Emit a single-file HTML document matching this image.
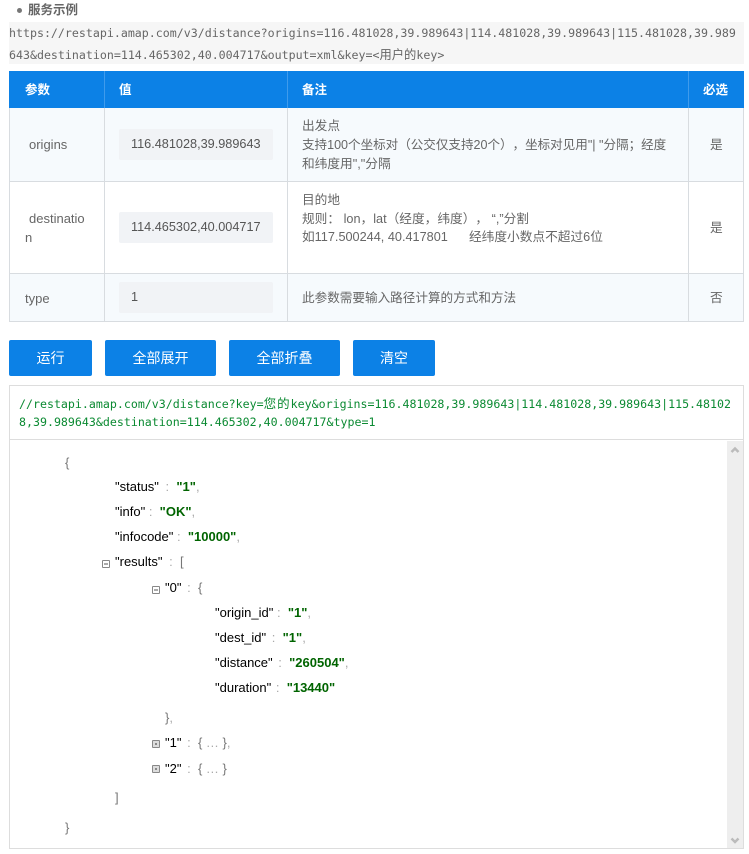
<!DOCTYPE html>
<html lang="zh-CN">
<head>
<meta charset="utf-8">
<title>服务示例</title>
<style>
html,body{margin:0;padding:0;background:#fff;}
body{width:749px;height:854px;position:relative;overflow:hidden;font-family:"Liberation Sans","Noto Sans CJK SC",sans-serif;text-spacing-trim:space-all;}
.a{position:absolute;white-space:nowrap;}
.b{position:absolute;}
.t{font-size:12.7px;color:#666;line-height:18px;margin-top:1px;}
.l{font-size:13px;}
.th{font-size:12.5px;color:#fff;font-weight:bold;line-height:18px;margin-top:1px;}
.in{position:absolute;left:119px;width:154px;height:31px;background:#f1f3f6;border-radius:2px;font-size:12.7px;color:#555;line-height:31px;text-indent:12px;}
.btn{position:absolute;top:340px;height:36px;background:#0c81e6;border-radius:2px;color:#fff;font-size:14px;line-height:36px;text-align:center;}
.m{font-family:"DejaVu Sans Mono","Noto Sans CJK SC",monospace;font-size:11.628px;line-height:18px;}
.j{position:absolute;white-space:pre;font-family:"Liberation Sans",sans-serif;font-size:13px;line-height:16px;color:#000;margin-top:1px;}
.j i{font-style:normal;color:#aaa;}
.j b{color:#006400;}
.j u{text-decoration:none;color:#777;}
.ic{position:absolute;width:6px;height:6px;border:1px solid #888;border-radius:1px;background:#fff;}
.ic:before{content:"";position:absolute;left:1px;top:2px;width:4px;height:2px;background:#aaa;}
.ic.p{background:#ddd;}
.ic.p:before{left:2px;top:2px;width:2px;height:2px;background:#888;}
</style>
</head>
<body>
<div class="b" style="left:17px;top:8px;width:5px;height:5px;border-radius:50%;background:#777;"></div>
<div class="a" style="left:28px;top:1px;font-size:12.5px;font-weight:bold;color:#666;line-height:18px;">服务示例</div>

<div class="b" style="left:9px;top:22px;width:735px;height:42px;background:#f6f6f6;"></div>
<div class="a m" style="left:9px;top:24px;color:#666;">https://restapi.amap.com/v3/distance?origins=116.481028,39.989643|114.481028,39.989643|115.481028,39.989</div>
<div class="a m" style="left:9px;top:46px;color:#666;">643&amp;destination=114.465302,40.004717&amp;output=xml&amp;key=&lt;<span style="font-size:12.3px">用户的</span>key&gt;</div>

<!-- table -->
<div class="b" style="left:9px;top:71px;width:735px;height:37px;background:#0c81e6;"></div>
<div class="b" style="left:9px;top:108px;width:735px;height:73px;background:#f6fafd;"></div>
<div class="b" style="left:9px;top:273px;width:735px;height:48px;background:#f6fafd;"></div>
<div class="b" style="left:104px;top:71px;width:1px;height:37px;background:#3f9bec;"></div>
<div class="b" style="left:287px;top:71px;width:1px;height:37px;background:#3f9bec;"></div>
<div class="b" style="left:688px;top:71px;width:1px;height:37px;background:#3f9bec;"></div>
<div class="b" style="left:9px;top:108px;width:1px;height:214px;background:#d8dce0;"></div>
<div class="b" style="left:104px;top:108px;width:1px;height:214px;background:#d8dce0;"></div>
<div class="b" style="left:287px;top:108px;width:1px;height:214px;background:#d8dce0;"></div>
<div class="b" style="left:688px;top:108px;width:1px;height:214px;background:#d8dce0;"></div>
<div class="b" style="left:743px;top:108px;width:1px;height:214px;background:#d8dce0;"></div>
<div class="b" style="left:9px;top:181px;width:735px;height:1px;background:#d8dce0;"></div>
<div class="b" style="left:9px;top:273px;width:735px;height:1px;background:#d8dce0;"></div>
<div class="b" style="left:9px;top:321px;width:735px;height:1px;background:#d8dce0;"></div>

<div class="a th" style="left:25px;top:80px;">参数</div>
<div class="a th" style="left:119px;top:80px;">值</div>
<div class="a th" style="left:302px;top:80px;">备注</div>
<div class="a th" style="left:703px;top:80px;">必选</div>

<div class="a t l" style="left:29px;top:135px;">origins</div>
<div class="in" style="top:129px;">116.481028,39.989643</div>
<div class="a t" style="left:302px;top:116px;">出发点</div>
<div class="a t" style="left:302px;top:135px;font-size:12.55px;">支持100个坐标对（公交仅支持20个），坐标对见用"| "分隔；经度</div>
<div class="a t" style="left:302px;top:154px;">和纬度用","分隔</div>
<div class="a t" style="left:710px;top:135px;">是</div>

<div class="a t l" style="left:29px;top:209px;">destinatio</div>
<div class="a t l" style="left:25px;top:228px;">n</div>
<div class="in" style="top:212px;">114.465302,40.004717</div>
<div class="a t" style="left:302px;top:190px;">目的地</div>
<div class="a t" style="left:302px;top:209px;">规则： lon，lat（经度，纬度）， “,”分割</div>
<div class="a t" style="left:302px;top:227px;">如117.500244, 40.417801 &nbsp; &nbsp; &nbsp;经纬度小数点不超过6位</div>
<div class="a t" style="left:710px;top:218px;">是</div>

<div class="a t l" style="left:25px;top:289px;">type</div>
<div class="in" style="top:282px;">1</div>
<div class="a t" style="left:302px;top:288px;font-size:12.6px;">此参数需要输入路径计算的方式和方法</div>
<div class="a t" style="left:710px;top:288px;">否</div>

<!-- buttons -->
<div class="btn" style="left:9px;width:83px;">运行</div>
<div class="btn" style="left:105px;width:111px;">全部展开</div>
<div class="btn" style="left:229px;width:111px;">全部折叠</div>
<div class="btn" style="left:353px;width:82px;">清空</div>

<!-- result box -->
<div class="b" style="left:9px;top:385px;width:733px;height:462px;border:1px solid #ddd;"></div>
<div class="b" style="left:10px;top:439px;width:733px;height:1px;background:#ddd;"></div>
<div class="a m" style="left:19px;top:395px;color:#0b8a32;">//restapi.amap.com/v3/distance?key=<span style="font-size:12.5px;letter-spacing:1px">您的</span>key&amp;origins=116.481028,39.989643|114.481028,39.989643|115.48102</div>
<div class="a m" style="left:19px;top:413px;color:#0b8a32;">8,39.989643&amp;destination=114.465302,40.004717&amp;type=1</div>

<!-- scrollbar -->
<div class="b" style="left:727px;top:441px;width:16px;height:407px;background:#eee;"></div>
<svg class="b" style="left:727px;top:441px;" width="16" height="407" viewBox="0 0 16 407">
<path d="M4.5 11 L8 7.5 L11.5 11" fill="none" stroke="#bbb" stroke-width="2.5"/>
<path d="M4.5 397.5 L8 401 L11.5 397.5" fill="none" stroke="#bbb" stroke-width="2.5"/>
</svg>

<!-- json -->
<div class="j" style="left:65px;top:454px;"><u>{</u></div>
<div class="j" style="left:115px;top:478px;">"status"<i style="margin-left:3px"> : </i> <b>"1"</b><i>,</i></div>
<div class="j" style="left:115px;top:503px;">"info"<i> : </i> <b>"OK"</b><i>,</i></div>
<div class="j" style="left:115px;top:528px;">"infocode"<i> : </i> <b>"10000"</b><i>,</i></div>
<div class="ic" style="left:102px;top:560px;"></div>
<div class="j" style="left:115px;top:553px;">"results"<i style="margin-left:3px"> : </i> <u>[</u></div>
<div class="ic" style="left:152px;top:586px;"></div>
<div class="j" style="left:165px;top:579px;">"0"<i style="margin-left:2px"> : </i> <u>{</u></div>
<div class="j" style="left:215px;top:604px;">"origin_id"<i> : </i> <b>"1"</b><i>,</i></div>
<div class="j" style="left:215px;top:629px;">"dest_id"<i style="margin-left:2px"> : </i> <b>"1"</b><i>,</i></div>
<div class="j" style="left:215px;top:654px;">"distance"<i style="margin-left:2px"> : </i> <b>"260504"</b><i>,</i></div>
<div class="j" style="left:215px;top:679px;">"duration"<i style="margin-left:1px"> : </i> <b>"13440"</b></div>
<div class="j" style="left:165px;top:709px;"><u>}</u><i>,</i></div>
<div class="ic p" style="left:152px;top:740px;"></div>
<div class="j" style="left:165px;top:734px;">"1"<i style="margin-left:2px"> : </i> <u>{</u> <i>…</i> <u>}</u><i>,</i></div>
<div class="ic p" style="left:152px;top:765px;"></div>
<div class="j" style="left:165px;top:760px;">"2"<i style="margin-left:2px"> : </i> <u>{</u> <i>…</i> <u>}</u></div>
<div class="j" style="left:115px;top:789px;"><u>]</u></div>
<div class="j" style="left:65px;top:819px;"><u>}</u></div>
</body>
</html>
